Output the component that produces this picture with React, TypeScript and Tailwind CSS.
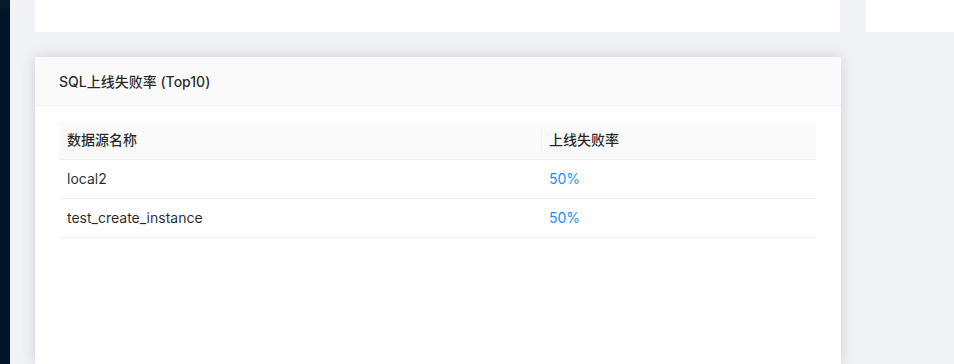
import React from 'react'

const rows = [
  { name: 'local2', rate: '50%' },
  { name: 'test_create_instance', rate: '50%' },
]

export default function App() {
  return (
    <div
      className="flex h-[364px] w-[954px] overflow-hidden bg-[#f0f2f5] text-[14px] text-[rgba(0,0,0,0.85)]"
      style={{ fontFamily: 'Inter, "Noto Sans CJK SC", sans-serif' }}
    >
      {/* sidebar edge */}
      <div className="flex w-[10px] shrink-0 flex-col bg-[#001529]">
        <div className="h-[9px] bg-[#0b1a2a]" />
      </div>

      <div className="flex flex-1 flex-col pl-[25px]">
        {/* top row cards */}
        <div className="flex h-[32px] shrink-0 gap-[26px]">
          <div className="w-[805px] bg-white" />
          <div className="flex-1 bg-white" />
        </div>

        {/* failure rate card */}
        <div className="mt-[25px] flex w-[806px] flex-1 flex-col bg-white shadow-[0_0_14px_rgba(0,0,0,0.14)]">
          <div className="flex h-[49px] shrink-0 items-center border-b border-[#f0f0f0] bg-[#fafafa] px-[24px]">
            <span className="font-medium">SQL上线失败率 (Top10)</span>
          </div>

          <div className="px-[24px] pt-[15px]">
            <table className="w-[757px] border-collapse text-left">
              <thead>
                <tr className="h-[38px] border-b border-[#f0f0f0] bg-[#fafafa]">
                  <th className="relative w-[482px] px-[8px] font-medium">数据源名称</th>
                  <th className="relative px-[8px] font-medium">
                    <span className="absolute left-0 top-1/2 h-[22px] w-px -translate-y-1/2 bg-[#f0f0f0]" />
                    上线失败率
                  </th>
                </tr>
              </thead>
              <tbody>
                {rows.map(r => (
                  <tr key={r.name} className="h-[39px] border-b border-[#f0f0f0]">
                    <td className="px-[8px]">{r.name}</td>
                    <td className="px-[8px] text-[#1890ff]">{r.rate}</td>
                  </tr>
                ))}
              </tbody>
            </table>
          </div>
        </div>
      </div>
    </div>
  )
}
